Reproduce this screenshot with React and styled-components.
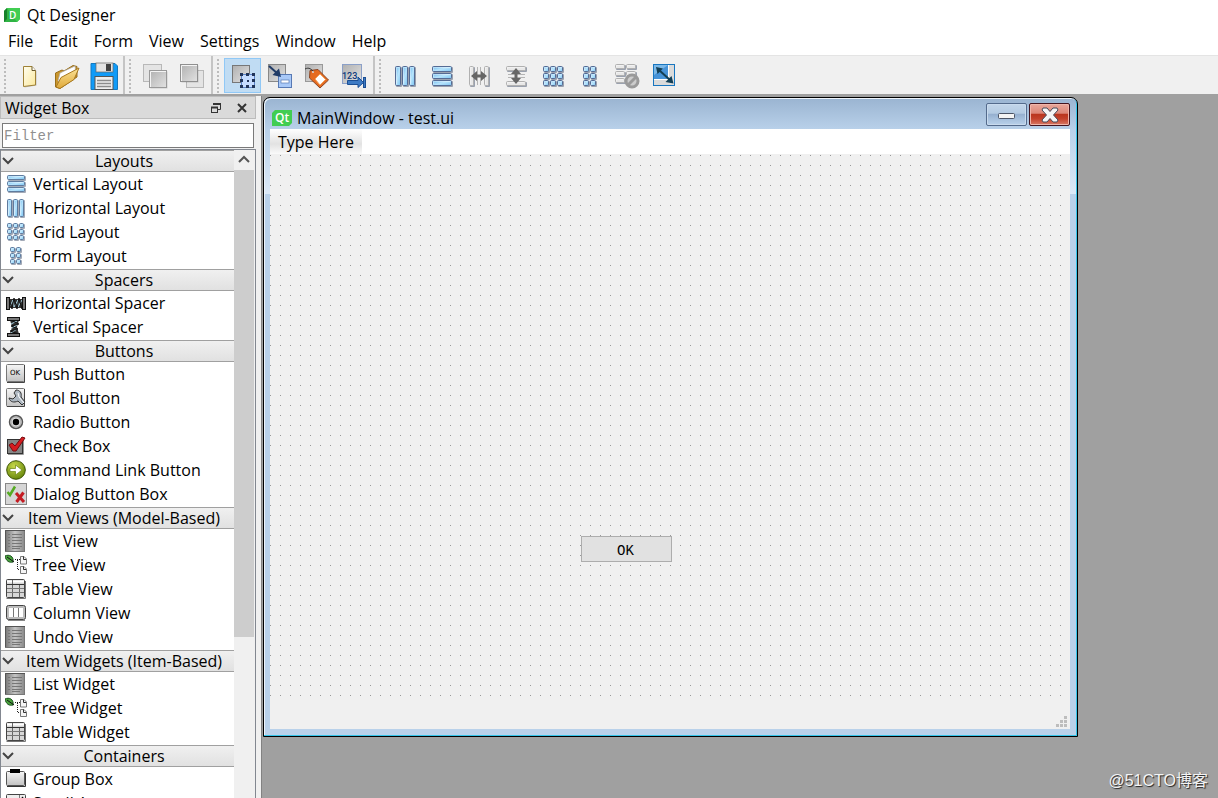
import React, { useState } from 'react'
import styled, { createGlobalStyle, css } from 'styled-components'

const GlobalStyle = createGlobalStyle`
  * {
    box-sizing: border-box;
  }
  body {
    margin: 0;
    background: #f0f0f0;
    color: #000;
    font-family: 'Open Sans', 'Noto Sans', 'Noto Sans CJK SC', sans-serif;
    font-size: 16px;
    line-height: 24px;
  }
  button, input {
    margin: 0;
    padding: 0;
    border: none;
    background: none;
    color: inherit;
    font: inherit;
  }
  svg {
    display: block;
    flex: none;
  }
`;

const Page = styled.div`
  position: relative;
  display: flex;
  flex-direction: column;
  height: 100vh;
  overflow: hidden;
`;

const AppTitle = styled.header`
  display: flex;
  align-items: center;
  gap: 7px;
  height: 29px;
  padding-left: 4px;
  background: #fff;
`;

const AppName = styled.h1`
  margin: 0;
  font-size: 16px;
  font-weight: 400;
`;

const MenuBar = styled.nav`
  display: flex;
  align-items: flex-start;
  height: 26px;
  background: #fff;
`;

const MenuButton = styled.button`
  padding: 0 8px;
`;

const Toolbar = styled.div`
  display: flex;
  height: 41px;
  border-top: 1px solid #e4e4e4;
  border-bottom: 2px solid #a0a0a0;
  background: #f0f0f0;
`;

const ToolGroup = styled.div`
  display: flex;
  align-items: flex-end;
  padding: 0 1px 1px 0;
  border-right: 2px solid #c4c4c4;
  &:last-child {
    border-right: none;
  }
`;

const Handle = styled.span`
  width: 2px;
  height: 34px;
  margin: 0 5px 0 4px;
  background: repeating-linear-gradient(#bcbcbc 0 2px, transparent 2px 4px);
`;

const ToolButton = styled.button`
  display: flex;
  align-items: center;
  justify-content: center;
  width: 37px;
  height: 35px;
  border: 1px solid transparent;
  ${props => props.$active && css`
    border-color: #90c8f6;
    background: #c0dcf3;
  `}
`;

const Workspace = styled.main`
  display: flex;
  flex: 1;
  min-height: 0;
`;

const Dock = styled.aside`
  display: flex;
  flex-direction: column;
  flex: none;
  width: 256px;
`;

const DockTitle = styled.div`
  display: flex;
  align-items: center;
  height: 23px;
  padding: 0 7px 0 4px;
  border: 1px solid #bcbcbc;
  background: #dadada;
`;

const DockName = styled.h2`
  flex: 1;
  margin: 0;
  font-size: 16px;
  font-weight: 400;
`;

const DockButton = styled.button`
  display: flex;
  align-items: center;
  justify-content: center;
  width: 12px;
  height: 16px;
  margin-left: 14px;
`;

const FilterInput = styled.input`
  height: 25px;
  margin: 4px 2px 1px;
  padding: 0 1px;
  border: 1px solid #7a7a7a;
  background: #fff;
  font-family: 'Liberation Mono', monospace;
  font-size: 14px;
  &::placeholder {
    color: #909090;
    opacity: 1;
  }
`;

const ListFrame = styled.div`
  display: flex;
  flex: 1;
  min-height: 0;
  border: 1px solid #828790;
  border-bottom: none;
  background: #fff;
`;

const WidgetList = styled.div`
  flex: 1;
  overflow: hidden;
`;

const GroupHeader = styled.button`
  display: flex;
  align-items: center;
  width: 100%;
  height: 22px;
  padding-left: 1px;
  border-top: 1px solid #a0a0a0;
  border-bottom: 1px solid #a0a0a0;
  background: linear-gradient(#f0f0f0, #e1e1e1);
  line-height: 20px;
`;

const GroupName = styled.span`
  flex: 1;
  text-align: center;
`;

const Items = styled.ul`
  margin: 0;
  padding: 0 0 1px;
  list-style: none;
`;

const ItemButton = styled.button`
  display: flex;
  align-items: center;
  gap: 6px;
  width: 100%;
  height: 24px;
  padding-left: 4px;
  text-align: left;
`;

const ScrollTrack = styled.div`
  display: flex;
  flex-direction: column;
  width: 21px;
  padding-right: 1px;
  background: #f0f0f0;
`;

const ScrollArrow = styled.button`
  display: flex;
  align-items: center;
  justify-content: center;
  height: 20px;
`;

const ScrollThumb = styled.div`
  flex: 0 0 72%;
  background: #cdcdcd;
`;

const MdiArea = styled.section`
  position: relative;
  flex: 1;
  margin-left: 5px;
  border-left: 1px solid #828282;
  background: #a0a0a0;
  overflow: hidden;
`;

const FormWindow = styled.div`
  position: absolute;
  left: 1px;
  top: 1px;
  display: flex;
  flex-direction: column;
  width: 815px;
  height: 640px;
  padding: 0 7px 7px 6px;
  border: 1px solid #000;
  border-radius: 7px 7px 0 0;
  background:
    linear-gradient(#9ab4d1, #b9d1ea 32px, #dce9f7 96px, #b9d1ea 96px);
  box-shadow: inset -1px -1px #35c5ea, inset 1px 1px #eef5fc;
`;

const Caption = styled.div`
  display: flex;
  align-items: flex-start;
  height: 31px;
  padding-left: 2px;
`;

const CaptionTitle = styled.div`
  display: flex;
  align-items: center;
  flex: 1;
  gap: 5px;
  padding-top: 8px;
`;

const CaptionButtons = styled.div`
  display: flex;
  gap: 2px;
  padding-top: 5px;
`;

const CaptionButton = styled.button`
  display: flex;
  align-items: center;
  justify-content: center;
  width: 41px;
  height: 23px;
  border: 1px solid ${props => props.$close ? '#43141f' : '#546b8c'};
  border-radius: 2px;
  background: ${props => props.$close
    ? 'linear-gradient(#e9a89c, #dc8576 45%, #b8331c 46%, #c4412b 70%, #d87a66)'
    : 'linear-gradient(#c3d6ea, #b3cae2 45%, #94aece 46%, #a5bfdc 70%, #b9d1ea)'};
  box-shadow: inset 0 0 0 1px ${props => props.$close ? '#efb5aa' : '#c9dbee'};
`;

const FormMenu = styled.div`
  display: flex;
  height: 25px;
  background: #fff;
`;

const TypeHere = styled.button`
  padding: 0 8px;
  background: linear-gradient(#fff, #e2e2e2 60%, #fafafa);
`;

const FormCanvas = styled.div`
  position: relative;
  flex: 1;
  background: conic-gradient(from 270deg at 1px 1px, #999 90deg, transparent 0) 0 1px / 10px 10px #f0f0f0;
`;

const PlacedButton = styled.button`
  position: absolute;
  left: 311px;
  top: 382px;
  width: 91px;
  height: 26px;
  padding: 3px 2px 0 0;
  border: 1px solid #adadad;
  background: #e1e1e1;
  font-family: 'Liberation Mono', monospace;
  font-size: 14px;
  line-height: 20px;
`;

const StatusBar = styled.div`
  display: flex;
  align-items: flex-end;
  justify-content: flex-end;
  height: 32px;
  padding: 2px;
  background: #f0f0f0;
`;

const Watermark = styled.span`
  position: absolute;
  right: 10px;
  bottom: 5px;
  color: #f4f4f4;
  font-family: 'Liberation Sans', 'Noto Sans CJK SC', sans-serif;
  text-shadow: 1px 1px 1px #222;
`;

// gradients shared by all the icons
const IconDefs = () => (
  <svg width="0" height="0" style={{ position: 'absolute' }} aria-hidden="true">
    <defs>
      <linearGradient id="blue" x1="0" y1="0" x2="1" y2="1">
        <stop offset="0" stopColor="#68b8ee" />
        <stop offset="0.5" stopColor="#b8e4fc" />
        <stop offset="1" stopColor="#7cc4f2" />
      </linearGradient>
      <linearGradient id="grey" x1="0" y1="0" x2="1" y2="1">
        <stop offset="0" stopColor="#b0b0b0" />
        <stop offset="1" stopColor="#e2e2e2" />
      </linearGradient>
      <linearGradient id="silver" x1="0" y1="0" x2="0" y2="1">
        <stop offset="0" stopColor="#f6f6f6" />
        <stop offset="1" stopColor="#c2c2c2" />
      </linearGradient>
      <linearGradient id="paper" x1="0" y1="0" x2="1" y2="1">
        <stop offset="0" stopColor="#fffef0" />
        <stop offset="1" stopColor="#fbe89c" />
      </linearGradient>
      <linearGradient id="folder" x1="0" y1="0" x2="0" y2="1">
        <stop offset="0" stopColor="#fbe296" />
        <stop offset="1" stopColor="#dfa93a" />
      </linearGradient>
      <radialGradient id="green" cx="0.4" cy="0.3" r="0.8">
        <stop offset="0" stopColor="#c8d94a" />
        <stop offset="1" stopColor="#5c7d04" />
      </radialGradient>
      <linearGradient id="list" x1="0" y1="0" x2="1" y2="0">
        <stop offset="0" stopColor="#777" />
        <stop offset="0.5" stopColor="#c4c4c4" />
        <stop offset="1" stopColor="#888" />
      </linearGradient>
    </defs>
  </svg>
)

const Icon = ({ size = 22, children }) => (
  <svg width={size} height={size} viewBox={`0 0 ${size} ${size}`} fill="none" aria-hidden="true">
    {children}
  </svg>
)

// small rounded cells, each one is [x, y, width, height]
const Cells = ({ cells, fill = 'url(#blue)', stroke = '#566b94' }) => cells.map(([x, y, w, h]) => (
  <g key={`${x}-${y}`}>
    <rect x={x + 1} y={y + 1} width={w} height={h} rx="1" fill="#1a2a4a" opacity="0.4" />
    <rect x={x + 0.5} y={y + 0.5} width={w - 1} height={h - 1} rx="1" fill={fill} stroke={stroke} />
    <path d={`M${x + 1.5} ${y + h - 2}V${y + 1.5}H${x + w - 2}`} stroke="#fff" strokeOpacity="0.4" />
  </g>
))

const grid = (xs, ys, w, h) => xs.flatMap(x => ys.map(y => [x, y, w, h]))

const toolIcons = {
  new: (
    <>
      <path d="M8.5 5.5H17.5L20.5 9V23.5L8.5 25.5Z" fill="#000" opacity="0.2" />
      <path d="M7.5 4.5H16L19.5 8.5V23L7.5 24.5Z" fill="url(#paper)" stroke="#a08236" />
      <path d="M16 4.5V8.5H19.5" fill="#fff" stroke="#6b5a2c" />
    </>
  ),
  open: (
    <>
      <path d="M2.5 25V11L9 8L11 9L20 3.5L24 4.5V15L7 26.5Z" fill="#c9962f" stroke="#9a6f1a" />
      <path d="M5 19L7 11L22 4L23 12L8 22Z" fill="#fff" stroke="#aaa" strokeWidth="0.7" />
      <path d="M3 25L8 15.5L26 6L21 17.5L7 26.5Z" fill="url(#folder)" stroke="#a8791f" />
    </>
  ),
  save: (
    <>
      <path d="M1 1.5H25L27.5 4V27.5H1Z" fill="#109bf8" stroke="#1379c0" />
      <rect x="6" y="1" width="17" height="9" fill="#e4e4e4" stroke="#666" strokeWidth="0.7" />
      <rect x="16" y="2" width="5" height="7" fill="#424242" />
      <rect x="5" y="14.5" width="18" height="13" fill="#eee" stroke="#555" />
      <path d="M7 18.5H21M7 21.5H21M7 24.5H21" stroke="#8b8b8b" strokeWidth="1.5" />
    </>
  ),
  lower: (
    <>
      <rect x="2.5" y="2.5" width="18" height="17" fill="#e4e4e4" stroke="#b8b8b8" />
      <rect x="9.5" y="9.5" width="17" height="17" fill="#000" opacity="0.15" />
      <rect x="8.5" y="8.5" width="17" height="17" fill="url(#grey)" stroke="#999" />
      <path d="M9.5 25V9.5H25" stroke="#f4f4f4" />
    </>
  ),
  raise: (
    <>
      <rect x="8.5" y="8.5" width="17" height="17" fill="#e4e4e4" stroke="#b8b8b8" />
      <rect x="3.5" y="3.5" width="17" height="17" fill="#000" opacity="0.15" />
      <rect x="2.5" y="2.5" width="17" height="17" fill="url(#grey)" stroke="#8f8f8f" />
      <path d="M3.5 19V3.5H19" stroke="#f4f4f4" />
    </>
  ),
  widgets: (
    <>
      <rect x="3.5" y="3.5" width="17" height="17" fill="url(#grey)" stroke="#777" />
      <rect x="12.5" y="12.5" width="13" height="13" fill="#c5dcff" stroke="#5c83c8" />
      {grid([11, 17, 23], [11, 17, 23], 3, 3).map(([x, y]) => (
        (x !== 17 || y !== 17) && <rect key={`${x}-${y}`} x={x} y={y} width="3" height="3" fill="#203358" />
      ))}
      <rect x="18" y="18" width="2" height="2" fill="#203358" />
    </>
  ),
  signals: (
    <>
      <rect x="2.5" y="2.5" width="17" height="17" fill="url(#grey)" stroke="#888" />
      <rect x="12.5" y="12.5" width="13" height="13" fill="#a9c9f8" stroke="#5779b4" />
      <rect x="15" y="18" width="8" height="3" fill="#fff" stroke="#5779b4" strokeWidth="0.7" />
      <path d="M3 4L12 12" stroke="#203b66" strokeWidth="2" />
      <path d="M15 15L13 6.5L6.5 13Z" fill="#203b66" />
    </>
  ),
  buddies: (
    <>
      <rect x="2.5" y="2.5" width="17" height="17" fill="url(#grey)" stroke="#999" />
      <path d="M7 8.5L15 7.5L25.5 18L17 26L6.5 16Z" fill="#e56b20" stroke="#8a4523" />
      <path d="M12 17L17 12L22.5 17.5L17 23Z" fill="#fff" stroke="#f4a25e" />
      <path d="M2 7C6 5 8 7 11 10" stroke="#333" />
      <circle cx="10" cy="10" r="1" fill="#ddd" />
    </>
  ),
  tabs: (
    <>
      <rect x="2.5" y="2.5" width="19" height="19" fill="url(#grey)" stroke="#8ba0c8" />
      <text x="2" y="17" fill="#0f3a7c" fontSize="9" fontWeight="500" fontFamily="Roboto, sans-serif">123</text>
      <path d="M7.5 18.5H18V15L23.5 20.5L18 25.5V22.5H7.5Z" fill="#3e7bc4" stroke="#1b4f94" />
      <rect x="23.5" y="15.5" width="2" height="10" fill="#3e7bc4" stroke="#1b4f94" />
    </>
  ),
  horizontal: <Cells cells={grid([4, 11, 18], [4], 6, 20)} />,
  vertical: <Cells cells={grid([4], [4, 11, 18], 20, 6)} />,
  hsplit: (
    <>
      <Cells cells={grid([4, 19], [4], 5, 20)} fill="#e8e8e8" stroke="#b0b0b0" />
      <path d="M12.5 5V23M15.5 5V23" stroke="#999" strokeWidth="0.7" />
      <path d="M6 14L12 9V12.5H16V9L22 14L16 19V15.5H12V19Z" fill="#666" />
    </>
  ),
  vsplit: (
    <>
      <Cells cells={grid([4], [4, 19], 20, 5)} fill="#e8e8e8" stroke="#b0b0b0" />
      <path d="M6 12.5H23M6 15.5H23" stroke="#999" strokeWidth="0.7" />
      <path d="M14 6L19 12H15.5V16H19L14 22L9 16H12.5V12H9Z" fill="#666" />
    </>
  ),
  grid: <Cells cells={grid([4, 11, 18], [4, 11, 18], 6, 6)} />,
  form: <Cells cells={grid([7, 14], [4, 11, 18], 6, 6)} />,
  breakup: (
    <>
      <Cells cells={grid([2, 13], [2, 9, 16], 10, 5)} fill="#e8e8e8" stroke="#b0b0b0" />
      <circle cx="19" cy="19" r="6" stroke="#9a9a9a" strokeWidth="3" fill="#ccc" />
      <path d="M15 23L23 15" stroke="#9a9a9a" strokeWidth="3" />
    </>
  ),
  adjust: (
    <>
      <rect x="3.5" y="2.5" width="21" height="21" fill="#dbdbdb" stroke="#1876c0" />
      <rect x="4" y="3" width="14" height="14" fill="#4693d8" />
      <path d="M4 3H18L4 13Z" fill="#9fd0f3" opacity="0.6" />
      <path d="M18.5 3V17.5H4" stroke="#fff" />
      <path d="M9 8L20 18" stroke="#133f55" strokeWidth="2" />
      <path d="M6 5L13 6.5L7.5 12ZM23.5 21.5L15.5 20L21.5 14Z" fill="#133f55" />
    </>
  ),
}

const listLines = [4, 7, 10, 13, 16]

const listIcon = (
  <>
    <rect x="0.5" y="0.5" width="19" height="21" fill="url(#list)" stroke="#777" />
    <path d="M0.5 21V0.5H20" stroke="#555" />
    {listLines.map(y => <path key={y} d={`M3 ${y}.5H5M7 ${y}.5H17`} stroke="#777" />)}
    <path d="M7 18.5H15" stroke="#777" />
  </>
)

const treeIcon = (
  <>
    <path d="M0 2C4 0 9 2 8 8C4 9 1 7 0 2Z" fill="#49a23c" stroke="#17501a" />
    <path d="M2 3L9 8" stroke="#111" />
    <path d="M10 5.5H16M12.5 6V15.5H16" stroke="#222" strokeDasharray="1 1" />
    <path d="M15.500 2.500H19L21.500 5V10H15.500ZM15.500 12.500H19L21.500 15V19.500H15.500Z" fill="#f5f5f5" stroke="#777" />
    <path d="M18.500 2.500V5.500H21M18.500 12.500V15.500H21" stroke="#333" />
  </>
)

const tableIcon = (
  <>
    <rect x="1.5" y="1.5" width="18" height="18" rx="1" fill="#d7d7d7" stroke="#444" />
    <path d="M2 3.5H19" stroke="#fff" strokeWidth="2" />
    <path d="M7.5 2V19M14.5 6V19" stroke="#666" />
    <path d="M2 6.5H19" stroke="#333" />
    <path d="M2 10.5H19M2 14.5H19" stroke="#777" />
    <path d="M1.5 20.5H20.5V3" stroke="#777" />
  </>
)

const itemIcons = {
  vertical: <Cells cells={grid([2], [2, 8, 14], 18, 5)} stroke="#5f7b9e" />,
  horizontal: <Cells cells={grid([2, 8, 14], [2], 5, 18)} stroke="#5f7b9e" />,
  grid: <Cells cells={grid([2, 8, 14], [2, 8, 14], 5, 5)} stroke="#5f7b9e" />,
  form: <Cells cells={grid([5, 11], [2, 8, 14], 5, 5)} stroke="#5f7b9e" />,
  hspacer: (
    <>
      <rect x="4" y="7" width="14" height="9" fill="#333" />
      <path d="M5 14L8 8L9 15L13 8L13 15L17 8" stroke="#a7d0e0" />
      <path d="M4 7L7 17L9 6L12 17L14 6L17 17L18 7" stroke="#111" />
      <rect x="1.5" y="5.5" width="3" height="12" fill="#777" stroke="#111" />
      <rect x="17.5" y="5.5" width="3" height="12" fill="#777" stroke="#111" />
    </>
  ),
  vspacer: (
    <>
      <path d="M5 4H14L12 11L14 18H5L7 11Z" fill="#333" />
      <path d="M6 8L12 5M7 12L12 9M6 17L12 13" stroke="#a7d0e0" />
      <path d="M5 4L14 8L6 10L13 13L5 15L14 18" stroke="#111" />
      <rect x="2.5" y="1.5" width="12" height="3" fill="#777" stroke="#111" />
      <rect x="2.5" y="17.5" width="12" height="3" fill="#777" stroke="#111" />
    </>
  ),
  push: (
    <>
      <rect x="1.5" y="1.5" width="18" height="17" rx="1" fill="url(#silver)" stroke="#777" />
      <path d="M2 19.5H19.5V2" stroke="#444" />
      <text x="5" y="12" fill="#000" fontSize="7" fontFamily="DejaVu Sans, sans-serif">OK</text>
    </>
  ),
  tool: (
    <>
      <rect x="1.5" y="1.5" width="18" height="18" rx="1" fill="url(#silver)" stroke="#777" />
      <path d="M2 19.5H19.5V2" stroke="#444" />
      <path d="M11 3C15 3 17 6 16 10L20 15L17 18L13 14C9 16 5 15 4 11L8 12L11 9L9 6Z" fill="#aeb8c2" stroke="#333" />
      <path d="M13 6L14 10L19 16" stroke="#fff" />
    </>
  ),
  radio: (
    <>
      <circle cx="11" cy="11" r="6.5" fill="#ddd" stroke="#555" strokeWidth="1.5" />
      <circle cx="11" cy="11" r="5" stroke="#aaa" />
      <circle cx="11" cy="11" r="3.2" fill="#000" />
    </>
  ),
  check: (
    <>
      <rect x="2.5" y="4.5" width="15" height="14" fill="#858585" stroke="#333" />
      <path d="M3 19.5H18.5V5" stroke="#999" />
      <path d="M4 10L7 8L10 11L17 2L20 3L11 16H8Z" fill="#d51c20" stroke="#780c10" />
    </>
  ),
  command: (
    <>
      <circle cx="11" cy="11" r="9.3" fill="url(#green)" stroke="#3d5403" />
      <path d="M5 9.5H10.5V6L17 11L10.5 16V12.5H5Z" fill="#fff" stroke="#6c8411" strokeWidth="0.7" />
    </>
  ),
  dialog: (
    <>
      <rect x="0.5" y="0.5" width="21" height="21" fill="#d6d6d6" stroke="#888" />
      <path d="M2.5 9L5 12L10 3.5" stroke="#55aa22" strokeWidth="2.5" />
      <path d="M11 10L19 19M18.5 9.5L11.5 19" stroke="#c51c23" strokeWidth="3" />
    </>
  ),
  list: listIcon,
  tree: treeIcon,
  table: tableIcon,
  column: (
    <>
      <rect x="1.5" y="3.5" width="19" height="14" rx="2" fill="#bbb" stroke="#444" />
      <path d="M4 6H8V15H4ZM9 6H13V15H9ZM14 6H18V15H14Z" fill="#fff" />
      <path d="M8.5 6V15M13.5 6V15" stroke="#777" />
      <path d="M3 18.5H20" stroke="#888" />
    </>
  ),
  group: (
    <>
      <rect x="1.5" y="3.5" width="18" height="14" rx="1" fill="url(#silver)" stroke="#555" />
      <path d="M2 18.5H20.5V5" stroke="#333" />
      <rect x="5" y="1" width="10" height="4" fill="#000" />
    </>
  ),
  scroll: (
    <>
      <rect x="1.5" y="2.5" width="19" height="18" rx="1" fill="#eee" stroke="#444" />
      <path d="M14.5 3V20" stroke="#777" />
      <path d="M15.5 7H19.5L17.5 4.5Z" fill="#000" />
    </>
  ),
}

const menus = ['File', 'Edit', 'Form', 'View', 'Settings', 'Window', 'Help']

const tools = [
  [['new', 'New'], ['open', 'Open'], ['save', 'Save']],
  [['lower', 'Send to Back'], ['raise', 'Bring to Front']],
  [['widgets', 'Edit Widgets'], ['signals', 'Edit Signals/Slots'], ['buddies', 'Edit Buddies'], ['tabs', 'Edit Tab Order']],
  [
    ['horizontal', 'Lay Out Horizontally'],
    ['vertical', 'Lay Out Vertically'],
    ['hsplit', 'Lay Out Horizontally in Splitter'],
    ['vsplit', 'Lay Out Vertically in Splitter'],
    ['grid', 'Lay Out in a Grid'],
    ['form', 'Lay Out in a Form Layout'],
    ['breakup', 'Break Layout'],
    ['adjust', 'Adjust Size'],
  ],
]

const widgetGroups = [
  { name: 'Layouts', items: [['vertical', 'Vertical Layout'], ['horizontal', 'Horizontal Layout'], ['grid', 'Grid Layout'], ['form', 'Form Layout']] },
  { name: 'Spacers', items: [['hspacer', 'Horizontal Spacer'], ['vspacer', 'Vertical Spacer']] },
  {
    name: 'Buttons',
    items: [
      ['push', 'Push Button'],
      ['tool', 'Tool Button'],
      ['radio', 'Radio Button'],
      ['check', 'Check Box'],
      ['command', 'Command Link Button'],
      ['dialog', 'Dialog Button Box'],
    ],
  },
  {
    name: 'Item Views (Model-Based)',
    items: [['list', 'List View'], ['tree', 'Tree View'], ['table', 'Table View'], ['column', 'Column View'], ['list', 'Undo View']],
  },
  { name: 'Item Widgets (Item-Based)', items: [['list', 'List Widget'], ['tree', 'Tree Widget'], ['table', 'Table Widget']] },
  { name: 'Containers', items: [['group', 'Group Box'], ['scroll', 'Scroll Area']] },
]

function WidgetGroup(props) {
  const { name, items } = props
  const [open, setOpen] = useState(true)

  const handleToggle = () => {
    setOpen(!open)
  }
  return (
    <div>
      <GroupHeader onClick={handleToggle} aria-expanded={open}>
        <Icon size={12}>
          <path d={open ? 'M1 3L6 8L11 3' : 'M4 1L9 6L4 11'} stroke="#444" strokeWidth="2" />
        </Icon>
        <GroupName>{name}</GroupName>
      </GroupHeader>
      {open && (
        <Items>
          {items.map(([icon, label]) => (
            <li key={label}>
              <ItemButton>
                <Icon>{itemIcons[icon]}</Icon>
                {label}
              </ItemButton>
            </li>
          ))}
        </Items>
      )}
    </div>
  )
}

function WidgetBox() {
  const [filter, setFilter] = useState('')
  const groups = widgetGroups
    .map(group => ({
      ...group,
      items: group.items.filter(([, label]) => label.toLowerCase().includes(filter.toLowerCase())),
    }))
    .filter(group => group.items.length > 0)

  return (
    <Dock>
      <DockTitle>
        <DockName>Widget Box</DockName>
        <DockButton aria-label="Float">
          <Icon size={12}>
            <path d="M3.5 3V1.5H10.5V7.5H8" stroke="#333" />
            <path d="M3 2H11" stroke="#333" strokeWidth="2" />
            <rect x="1.5" y="5.5" width="6" height="5" stroke="#333" />
            <path d="M1 5.5H8" stroke="#333" strokeWidth="2" />
          </Icon>
        </DockButton>
        <DockButton aria-label="Close">
          <Icon size={12}>
            <path d="M2 2L10 10M10 2L2 10" stroke="#333" strokeWidth="2" />
          </Icon>
        </DockButton>
      </DockTitle>
      <FilterInput
        aria-label="Filter"
        placeholder="Filter"
        value={filter}
        onChange={e => setFilter(e.target.value)}
      />
      <ListFrame>
        <WidgetList>
          {groups.map(group => <WidgetGroup key={group.name} {...group} />)}
        </WidgetList>
        <ScrollTrack>
          <ScrollArrow aria-label="Scroll up">
            <Icon size={12}>
              <path d="M1 8L6 3L11 8" stroke="#555" strokeWidth="2" />
            </Icon>
          </ScrollArrow>
          <ScrollThumb />
        </ScrollTrack>
      </ListFrame>
    </Dock>
  )
}

function MainWindowForm() {
  return (
    <FormWindow>
      <Caption>
        <CaptionTitle>
          <svg width="20" height="16" viewBox="0 0 20 16" aria-hidden="true">
            <path d="M3 0H20V13L17 16H0V3Z" fill="#41cd52" />
            <text x="3" y="12" fill="#fff" fontSize="12" fontWeight="600" fontFamily="Open Sans, sans-serif">Qt</text>
          </svg>
          MainWindow - test.ui
        </CaptionTitle>
        <CaptionButtons>
          <CaptionButton aria-label="Minimize">
            <Icon size={18}>
              <rect x="0.5" y="7.5" width="16" height="5" rx="1" fill="#f4f4f4" stroke="#4c5566" />
            </Icon>
          </CaptionButton>
          <CaptionButton $close aria-label="Close">
            <Icon size={18}>
              <path
                d="M2 2H6L9 5.500L12 2H16L17 4L12.500 9L17 14L16 16H12L9 12.500L6 16H2L1 14L5.500 9L1 4Z"
                fill="#f5f5f5"
                stroke="#4a4c5c"
                strokeLinejoin="round"
              />
            </Icon>
          </CaptionButton>
        </CaptionButtons>
      </Caption>
      <FormMenu>
        <TypeHere>Type Here</TypeHere>
      </FormMenu>
      <FormCanvas>
        <PlacedButton>OK</PlacedButton>
      </FormCanvas>
      <StatusBar>
        <Icon size={12}>
          <path
            d="M8 1H11V4H8ZM4 5H7V8H4ZM8 5H11V8H8ZM0 9H3V12H0ZM4 9H7V12H4ZM8 9H11V12H8Z"
            fill="#bdbdbd"
          />
        </Icon>
      </StatusBar>
    </FormWindow>
  )
}

function App() {
  const [mode, setMode] = useState('widgets')

  return (
    <Page>
      <GlobalStyle />
      <IconDefs />
      <AppTitle>
        <svg width="16" height="14" viewBox="0 0 16 14" aria-hidden="true">
          <path d="M3 0H16V11L13 14H0V3Z" fill="#2fb344" />
          <path d="M3 0H16V11L13 14Z" fill="#41cd52" />
          <path d="M0 3L3 0V11L0 14Z" fill="#17802b" />
          <text x="5" y="11" fill="#fff" fontSize="10" fontWeight="600" fontFamily="Open Sans, sans-serif">D</text>
        </svg>
        <AppName>Qt Designer</AppName>
      </AppTitle>
      <MenuBar>
        {menus.map(menu => <MenuButton key={menu}>{menu}</MenuButton>)}
      </MenuBar>
      <Toolbar>
        {tools.map((group, index) => (
          <ToolGroup key={index}>
            <Handle />
            {group.map(([icon, label]) => (
              <ToolButton
                key={icon}
                aria-label={label}
                $active={mode === icon}
                onClick={() => index === 2 && setMode(icon)}
              >
                <Icon size={28}>{toolIcons[icon]}</Icon>
              </ToolButton>
            ))}
          </ToolGroup>
        ))}
      </Toolbar>
      <Workspace>
        <WidgetBox />
        <MdiArea>
          <MainWindowForm />
        </MdiArea>
      </Workspace>
      <Watermark>@51CTO博客</Watermark>
    </Page>
  )
}

export default App
